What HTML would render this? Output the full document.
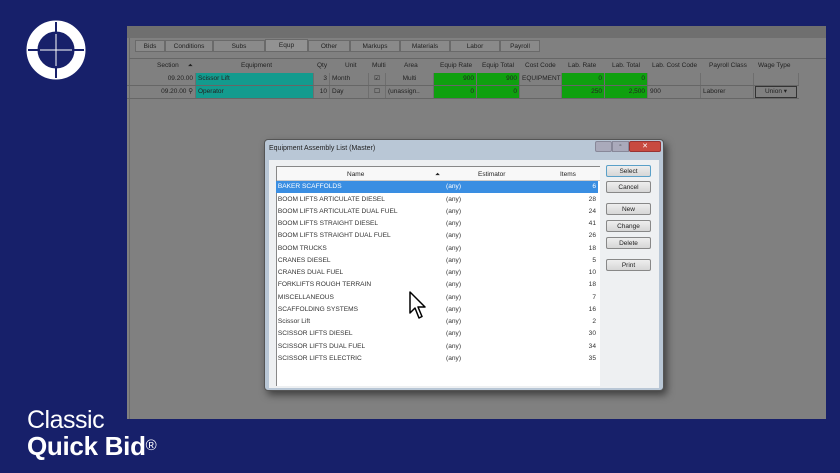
<!DOCTYPE html>
<html><head><style>
*{margin:0;padding:0;box-sizing:border-box}
body{width:840px;height:473px;background:#17206a;position:relative;overflow:hidden;font-family:"Liberation Sans",Arial,sans-serif}
.a{position:absolute}
.scr{left:127px;top:26px;width:699px;height:393px;background:#808080}
.t{font-size:6.5px;color:#222;white-space:nowrap;position:absolute}
.tab{position:absolute;top:14px;height:12px;border:1px solid #6a6a6a;background:#8a8a8a;font-size:6.5px;color:#222;text-align:center;line-height:11px}
.c{position:absolute;height:12px;font-size:6.5px;color:#222;line-height:12px;white-space:nowrap;overflow:hidden;padding:0 2px;border-right:1px solid #6e6e6e}
.row{position:absolute;left:12px;height:12.25px;font-size:6.6px;color:#333;line-height:12.25px;width:322px}
.btn{position:absolute;left:342px;width:45px;height:12px;border:1px solid #888;border-radius:2px;background:linear-gradient(#eee,#d6d6d6);font-size:6.5px;color:#222;text-align:center;line-height:11px}
</style></head><body>
<svg class="a" style="left:26px;top:20px" width="60" height="60" viewBox="0 0 60 60">
<circle cx="30" cy="30" r="24" fill="none" stroke="#fff" stroke-width="11"/>
<line x1="30" y1="2" x2="30" y2="58" stroke="#17206a" stroke-width="2"/>
<line x1="2" y1="30" x2="58" y2="30" stroke="#17206a" stroke-width="2"/>
<line x1="30" y1="14" x2="30" y2="46" stroke="#fff" stroke-width="1"/>
<line x1="14" y1="30" x2="46" y2="30" stroke="#fff" stroke-width="1"/>
</svg>
<div class="a" style="left:27px;top:407px;color:#fff;font-size:25px;line-height:26px;letter-spacing:-0.5px">Classic</div>
<div class="a" style="left:27px;top:432px;color:#fff;font-size:26px;font-weight:bold;line-height:28px;letter-spacing:-0.3px">Quick Bid<span style="font-size:15px;vertical-align:top;font-weight:normal">®</span></div>

<div class="a scr">
 <div class="a" style="left:0;top:0;width:699px;height:12px;background:#6f6f6f"></div>
 <div class="a" style="left:2px;top:12px;width:697px;height:381px;border-left:1px solid #6a6a6a"></div>
 <div class="tab" style="left:8px;width:30px">Bids</div>
 <div class="tab" style="left:38px;width:48px">Conditions</div>
 <div class="tab" style="left:86px;width:52px">Subs</div>
 <div class="tab" style="left:138px;width:43px;background:#929292;top:13px;height:13px">Equp</div>
 <div class="tab" style="left:181px;width:42px">Other</div>
 <div class="tab" style="left:223px;width:50px">Markups</div>
 <div class="tab" style="left:273px;width:50px">Materials</div>
 <div class="tab" style="left:323px;width:50px">Labor</div>
 <div class="tab" style="left:373px;width:40px">Payroll</div>
 <div class="a" style="left:2px;top:32px;width:697px;height:1px;background:#666"></div>
 <div class="t" style="left:30px;top:36px">Section &nbsp;&nbsp;&nbsp; ⏶</div>
 <div class="t" style="left:114px;top:36px">Equipment</div>
 <div class="t" style="left:190px;top:36px">Qty</div>
 <div class="t" style="left:218px;top:36px">Unit</div>
 <div class="t" style="left:245px;top:36px">Multi</div>
 <div class="t" style="left:277px;top:36px">Area</div>
 <div class="t" style="left:313px;top:36px">Equip Rate</div>
 <div class="t" style="left:355px;top:36px">Equip Total</div>
 <div class="t" style="left:398px;top:36px">Cost Code</div>
 <div class="t" style="left:441px;top:36px">Lab. Rate</div>
 <div class="t" style="left:485px;top:36px">Lab. Total</div>
 <div class="t" style="left:525px;top:36px">Lab. Cost Code</div>
 <div class="t" style="left:582px;top:36px">Payroll Class</div>
 <div class="t" style="left:631px;top:36px">Wage Type</div>
 <div class="a" style="left:0;top:47px;width:699px;height:12px">
  <div class="c" style="left:0;width:69px;text-align:right">09.20.00</div>
  <div class="c" style="left:69px;width:118px;background:#139b8e">Scissor Lift</div>
  <div class="c" style="left:187px;width:16px;text-align:right">3</div>
  <div class="c" style="left:203px;width:39px">Month</div>
  <div class="c" style="left:242px;width:17px;text-align:center">☑</div>
  <div class="c" style="left:259px;width:48px;text-align:center">Multi</div>
  <div class="c" style="left:307px;width:43px;background:#0fa00f;text-align:right">900</div>
  <div class="c" style="left:350px;width:43px;background:#0fa00f;text-align:right">900</div>
  <div class="c" style="left:393px;width:42px">EQUIPMENT</div>
  <div class="c" style="left:435px;width:43px;background:#0fa00f;text-align:right">0</div>
  <div class="c" style="left:478px;width:43px;background:#0fa00f;text-align:right">0</div>
  <div class="c" style="left:521px;width:53px"></div>
  <div class="c" style="left:574px;width:53px"></div>
  <div class="c" style="left:627px;width:45px"></div>
 </div>
 <div class="a" style="left:0;top:59px;width:672px;height:1px;background:#666"></div>
 <div class="a" style="left:0;top:60px;width:699px;height:12px">
  <div class="c" style="left:0;width:69px;text-align:right">09.20.00 ⚲</div>
  <div class="c" style="left:69px;width:118px;background:#139b8e">Operator</div>
  <div class="c" style="left:187px;width:16px;text-align:right">10</div>
  <div class="c" style="left:203px;width:39px">Day</div>
  <div class="c" style="left:242px;width:17px;text-align:center">☐</div>
  <div class="c" style="left:259px;width:48px">(unassign..</div>
  <div class="c" style="left:307px;width:43px;background:#0fa00f;text-align:right">0</div>
  <div class="c" style="left:350px;width:43px;background:#0fa00f;text-align:right">0</div>
  <div class="c" style="left:393px;width:42px"></div>
  <div class="c" style="left:435px;width:43px;background:#0fa00f;text-align:right">250</div>
  <div class="c" style="left:478px;width:43px;background:#0fa00f;text-align:right">2,500</div>
  <div class="c" style="left:521px;width:53px">900</div>
  <div class="c" style="left:574px;width:53px">Laborer</div>
  <div class="c" style="left:628px;width:42px;border:1px solid #333;text-align:center;line-height:10px">Union ▾</div>
 </div>
 <div class="a" style="left:0;top:72px;width:672px;height:1px;background:#666"></div>
</div>

<div class="a" style="left:264px;top:139px;width:400px;height:252px;background:#b9c7d6;border:1px solid #555;border-radius:4px;box-shadow:3px 4px 8px rgba(0,0,0,.5)">
 <div class="t" style="left:4px;top:5px;color:#222;font-size:7px">Equipment Assembly List (Master)</div>
 <div class="a" style="left:330px;top:1px;width:17px;height:11px;background:#aab;border:1px solid #889;border-radius:2px"></div>
 <div class="a" style="left:347px;top:1px;width:17px;height:11px;background:#aab;border:1px solid #889;font-size:6px;text-align:center;line-height:9px;color:#333">▫</div>
 <div class="a" style="left:364px;top:1px;width:32px;height:11px;background:#c84a40;border:1px solid #933;border-radius:2px;color:#fff;font-size:7px;text-align:center;line-height:10px">✕</div>
 <div class="a" style="left:4px;top:20px;width:390px;height:228px;background:#eef0f2"></div>
 <div class="a" style="left:11px;top:26px;width:324px;height:220px;background:#fff;border-left:1px solid #888;border-top:1px solid #888">
  <div class="a" style="left:0;top:0;width:323px;height:14px;border-bottom:1px solid #ccc;background:#f8f8f8"></div>
  <div class="t" style="left:70px;top:4px">Name</div>
  <div class="t" style="left:158px;top:4px">⏶</div>
  <div class="t" style="left:201px;top:4px">Estimator</div>
  <div class="t" style="left:283px;top:4px">Items</div>
 </div>
</div>
<div class="a" style="left:264px;top:181px;width:400px;height:14px">
 <div class="row" style="top:0;background:#3a8ee2;color:#fff;width:322px">&nbsp;BAKER SCAFFOLDS<span style="position:absolute;left:170px">(any)</span><span style="position:absolute;right:2px">6</span></div>
</div>
<div class="a" style="left:264px;top:139px;width:400px;height:252px">
 <div class="btn" style="top:26px;border-color:#5aa0c8">Select</div>
 <div class="btn" style="top:42px">Cancel</div>
 <div class="btn" style="top:64px">New</div>
 <div class="btn" style="top:81px">Change</div>
 <div class="btn" style="top:98px">Delete</div>
 <div class="btn" style="top:120px">Print</div>
</div>
<div class="a" style="left:264px;top:193.5px;width:400px">
<div class="row" style="top:0">&nbsp;BOOM LIFTS ARTICULATE DIESEL<span style="position:absolute;left:170px">(any)</span><span style="position:absolute;right:2px">28</span></div>
<div class="row" style="top:12.25px">&nbsp;BOOM LIFTS ARTICULATE DUAL FUEL<span style="position:absolute;left:170px">(any)</span><span style="position:absolute;right:2px">24</span></div>
<div class="row" style="top:24.5px">&nbsp;BOOM LIFTS STRAIGHT DIESEL<span style="position:absolute;left:170px">(any)</span><span style="position:absolute;right:2px">41</span></div>
<div class="row" style="top:36.75px">&nbsp;BOOM LIFTS STRAIGHT DUAL FUEL<span style="position:absolute;left:170px">(any)</span><span style="position:absolute;right:2px">26</span></div>
<div class="row" style="top:49px">&nbsp;BOOM TRUCKS<span style="position:absolute;left:170px">(any)</span><span style="position:absolute;right:2px">18</span></div>
<div class="row" style="top:61.25px">&nbsp;CRANES DIESEL<span style="position:absolute;left:170px">(any)</span><span style="position:absolute;right:2px">5</span></div>
<div class="row" style="top:73.5px">&nbsp;CRANES DUAL FUEL<span style="position:absolute;left:170px">(any)</span><span style="position:absolute;right:2px">10</span></div>
<div class="row" style="top:85.75px">&nbsp;FORKLIFTS ROUGH TERRAIN<span style="position:absolute;left:170px">(any)</span><span style="position:absolute;right:2px">18</span></div>
<div class="row" style="top:98px">&nbsp;MISCELLANEOUS<span style="position:absolute;left:170px">(any)</span><span style="position:absolute;right:2px">7</span></div>
<div class="row" style="top:110.25px">&nbsp;SCAFFOLDING SYSTEMS<span style="position:absolute;left:170px">(any)</span><span style="position:absolute;right:2px">16</span></div>
<div class="row" style="top:122.5px">&nbsp;Scissor Lift<span style="position:absolute;left:170px">(any)</span><span style="position:absolute;right:2px">2</span></div>
<div class="row" style="top:134.75px">&nbsp;SCISSOR LIFTS DIESEL<span style="position:absolute;left:170px">(any)</span><span style="position:absolute;right:2px">30</span></div>
<div class="row" style="top:147px">&nbsp;SCISSOR LIFTS DUAL FUEL<span style="position:absolute;left:170px">(any)</span><span style="position:absolute;right:2px">34</span></div>
<div class="row" style="top:159.25px">&nbsp;SCISSOR LIFTS ELECTRIC<span style="position:absolute;left:170px">(any)</span><span style="position:absolute;right:2px">35</span></div>
</div>
<svg class="a" style="left:409px;top:291px" width="20" height="30" viewBox="0 0 20 30">
<path d="M1 1 L1 22 L6 17 L10 27 L13 25.5 L9 16 L16 16 Z" fill="#fff" stroke="#000" stroke-width="1.5" stroke-linejoin="round"/>
</svg>
</body></html>
